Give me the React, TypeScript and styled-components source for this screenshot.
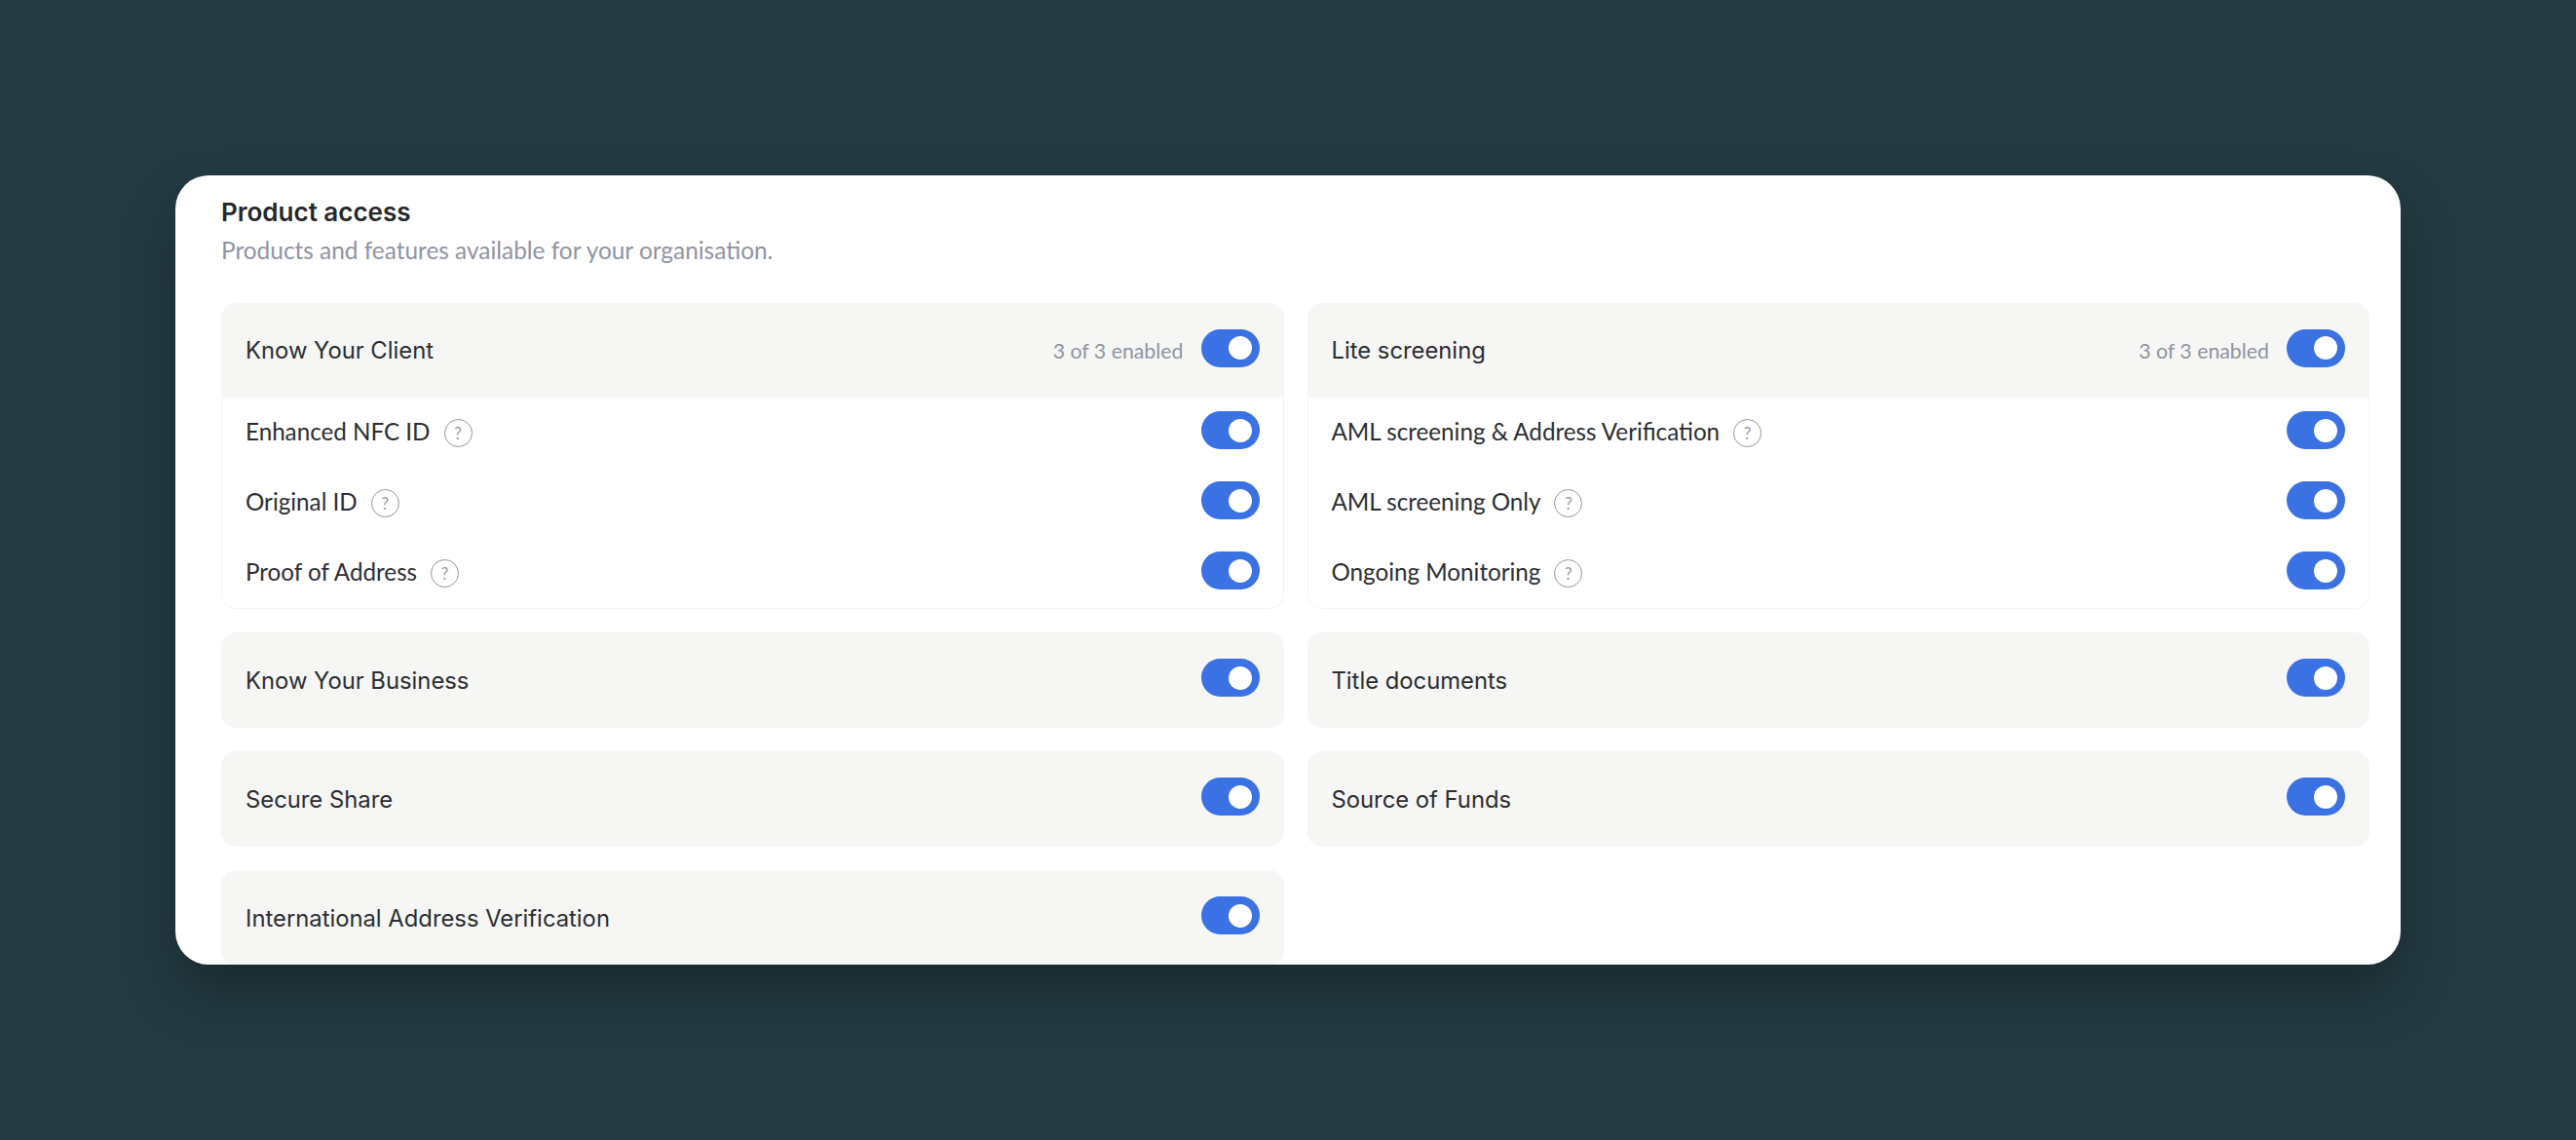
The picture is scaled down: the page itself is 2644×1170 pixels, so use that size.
import styled, { createGlobalStyle } from 'styled-components';

const GlobalStyle = createGlobalStyle`
  html, body {
    margin: 0;
    padding: 0;
    background: #243b43;
  }
`;

type Item = { label: string };

const kycItems: Item[] = [
  { label: 'Enhanced NFC ID' },
  { label: 'Original ID' },
  { label: 'Proof of Address' },
];

const liteItems: Item[] = [
  { label: 'AML screening & Address Verification' },
  { label: 'AML screening Only' },
  { label: 'Ongoing Monitoring' },
];

function Toggle() {
  return (
    <ToggleTrack>
      <ToggleKnob />
    </ToggleTrack>
  );
}

function ExpandedPanel({ title, items }: { title: string; items: Item[] }) {
  return (
    <section>
      <PanelHeader>
        <PanelTitle>{title}</PanelTitle>
        <HeaderRight>
          <EnabledCount>3 of 3 enabled</EnabledCount>
          <Toggle />
        </HeaderRight>
      </PanelHeader>
      <RowList>
        {items.map((item) => (
          <Row key={item.label}>
            <RowLabel>
              <RowText>{item.label}</RowText>
              <HelpBadge>?</HelpBadge>
            </RowLabel>
            <Toggle />
          </Row>
        ))}
      </RowList>
    </section>
  );
}

function SimplePanel({ title }: { title: string }) {
  return (
    <SimpleCard>
      <PanelTitle>{title}</PanelTitle>
      <Toggle />
    </SimpleCard>
  );
}

export default function App() {
  return (
    <>
      <GlobalStyle />
      <Page>
        <Card>
          <Heading>Product access</Heading>
          <Subheading>Products and features available for your organisation.</Subheading>
          <PanelGrid>
            <ExpandedPanel title="Know Your Client" items={kycItems} />
            <ExpandedPanel title="Lite screening" items={liteItems} />
            <SimplePanel title="Know Your Business" />
            <SimplePanel title="Title documents" />
            <SimplePanel title="Secure Share" />
            <SimplePanel title="Source of Funds" />
            <SimplePanel title="International Address Verification" />
          </PanelGrid>
        </Card>
      </Page>
    </>
  );
}

const Page = styled.main`
  box-sizing: border-box;
  width: 2644px;
  height: 1170px;
  padding: 180px;
  overflow: hidden;
  background: #243b43;
  font-family: 'Inter', 'Liberation Sans', sans-serif;
`;

const Card = styled.div`
  box-sizing: border-box;
  width: 2284px;
  height: 810px;
  padding: 20px 32px 0 47px;
  overflow: hidden;
  border-radius: 34px;
  background: #ffffff;
  box-shadow: 0 30px 60px rgba(0, 0, 0, 0.3);
`;

const Heading = styled.h1`
  margin: 0;
  color: #25282c;
  font-size: 26px;
  font-weight: 600;
  line-height: 36px;
`;

const Subheading = styled.p`
  margin: 3px 0 0;
  color: #8f94a3;
  font-family: 'Lato', 'Inter', sans-serif;
  font-size: 24.4px;
  font-weight: 400;
  line-height: 36px;
`;

const PanelGrid = styled.div`
  display: grid;
  grid-template-columns: 1fr 1fr;
  gap: 24px;
  align-items: start;
  margin-top: 36px;
`;

const PanelHeader = styled.header`
  display: flex;
  align-items: center;
  justify-content: space-between;
  box-sizing: border-box;
  height: 97px;
  padding: 0 25px;
  border-radius: 15px 15px 0 0;
  background: #f6f6f4;
`;

const HeaderRight = styled.div`
  display: flex;
  align-items: center;
  gap: 18px;
`;

const PanelTitle = styled.span`
  padding-top: 1px;
  color: #2b2e33;
  font-size: 23.8px;
  font-weight: 400;
  line-height: 32px;
`;

const EnabledCount = styled.span`
  color: #8f94a3;
  font-family: 'Lato', 'Inter', sans-serif;
  font-size: 21.3px;
  line-height: 32px;
`;

const RowList = styled.div`
  border: 1px solid #f3f3f2;
  border-top: none;
  border-radius: 0 0 15px 15px;
`;

const Row = styled.div`
  display: flex;
  align-items: center;
  justify-content: space-between;
  box-sizing: border-box;
  height: 72px;
  padding: 0 24px;
`;

const RowLabel = styled.div`
  display: flex;
  align-items: center;
  gap: 14px;
`;

const RowText = styled.span`
  padding-bottom: 2px;
  color: #2b2e33;
  font-family: 'Lato', 'Inter', sans-serif;
  font-size: 24.2px;
  font-weight: 400;
  line-height: 32px;
`;

const HelpBadge = styled.span`
  display: flex;
  align-items: center;
  justify-content: center;
  box-sizing: border-box;
  width: 29px;
  height: 29px;
  border: 1.5px solid #969696;
  border-radius: 50%;
  color: #9a9a9a;
  font-family: 'Lato', 'Inter', sans-serif;
  font-size: 17px;
  line-height: 1;
`;

const SimpleCard = styled.section`
  display: flex;
  align-items: center;
  justify-content: space-between;
  box-sizing: border-box;
  height: 98px;
  padding: 0 25px;
  border-radius: 15px;
  background: #f6f6f4;
`;

const ToggleTrack = styled.span`
  display: flex;
  align-items: center;
  justify-content: flex-end;
  box-sizing: border-box;
  width: 60px;
  height: 39px;
  margin-bottom: 5px;
  padding-right: 8px;
  border-radius: 20px;
  background: #3a71e3;
`;

const ToggleKnob = styled.span`
  width: 24px;
  height: 24px;
  border-radius: 50%;
  background: #ffffff;
`;
